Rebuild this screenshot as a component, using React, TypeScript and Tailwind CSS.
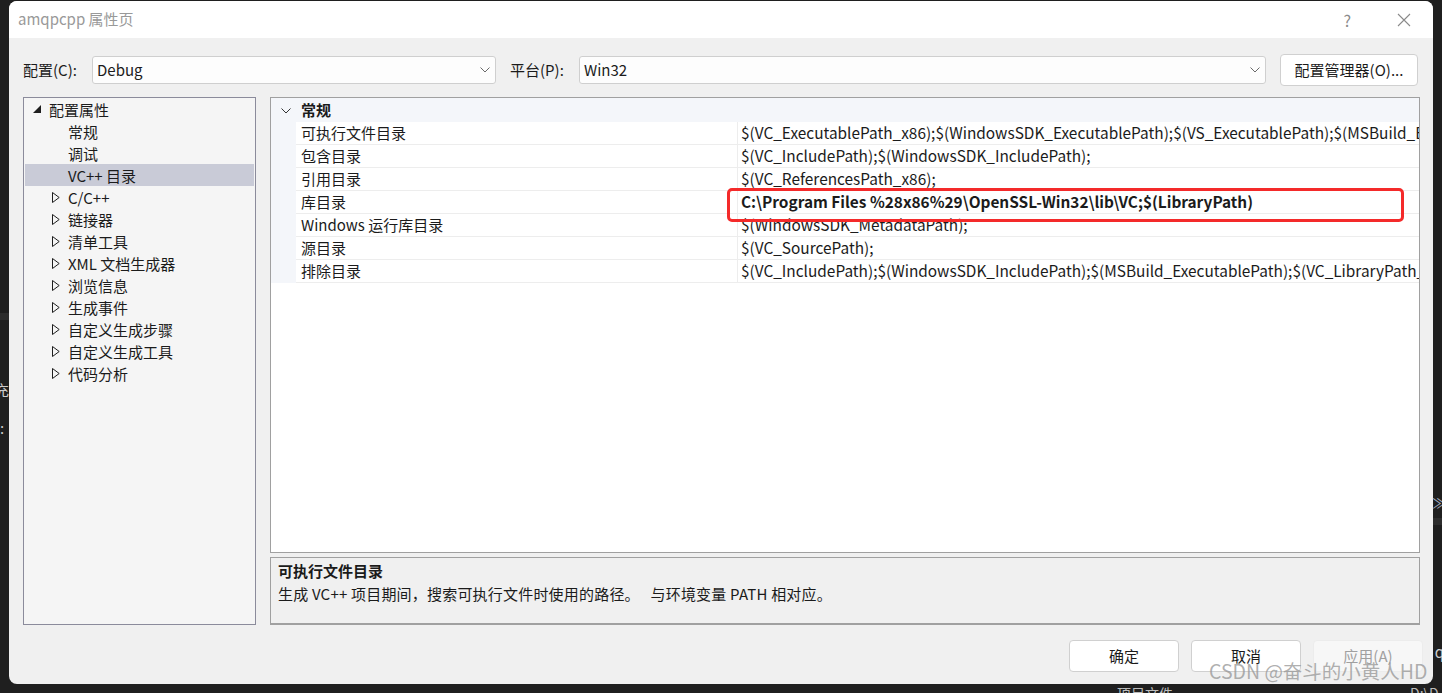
import React from 'react'

const font = { fontFamily: '"Noto Sans CJK SC", "Noto Sans", sans-serif' }

const tree = [
  { label: '配置属性', level: 0, open: true },
  { label: '常规', level: 1 },
  { label: '调试', level: 1 },
  { label: 'VC++ 目录', level: 1, selected: true },
  { label: 'C/C++', level: 1, collapsed: true },
  { label: '链接器', level: 1, collapsed: true },
  { label: '清单工具', level: 1, collapsed: true },
  { label: 'XML 文档生成器', level: 1, collapsed: true },
  { label: '浏览信息', level: 1, collapsed: true },
  { label: '生成事件', level: 1, collapsed: true },
  { label: '自定义生成步骤', level: 1, collapsed: true },
  { label: '自定义生成工具', level: 1, collapsed: true },
  { label: '代码分析', level: 1, collapsed: true },
]

const props = [
  {
    name: '可执行文件目录',
    value: '$(VC_ExecutablePath_x86);$(WindowsSDK_ExecutablePath);$(VS_ExecutablePath);$(MSBuild_ExecutablePath);$(FxCopDir);$(PATH);',
  },
  { name: '包含目录', value: '$(VC_IncludePath);$(WindowsSDK_IncludePath);' },
  { name: '引用目录', value: '$(VC_ReferencesPath_x86);' },
  {
    name: '库目录',
    value: 'C:\\Program Files %28x86%29\\OpenSSL-Win32\\lib\\VC;$(LibraryPath)',
    bold: true,
  },
  { name: 'Windows 运行库目录', value: '$(WindowsSDK_MetadataPath);' },
  { name: '源目录', value: '$(VC_SourcePath);' },
  {
    name: '排除目录',
    value: '$(VC_IncludePath);$(WindowsSDK_IncludePath);$(MSBuild_ExecutablePath);$(VC_LibraryPath_x86);',
  },
]

function Chevron({ className }: { className?: string }) {
  return (
    <svg width="10" height="6" viewBox="0 0 10 6" className={className}>
      <polyline points="0.5,0.5 5,5 9.5,0.5" fill="none" stroke="currentColor" strokeWidth="1" />
    </svg>
  )
}

function Combo({ value, width }: { value: string; width: string }) {
  return (
    <div
      className={`${width} flex h-[28px] items-center justify-between rounded-[3px] border border-[#cfcfcf] bg-[#fdfdfd] pl-[4px] pr-[5px] text-[15px] text-[#1b1b1b]`}
    >
      <span>{value}</span>
      <Chevron className="text-[#6a6a6a]" />
    </div>
  )
}

function Button({ label, disabled }: { label: string; disabled?: boolean }) {
  return (
    <div
      className={`flex h-[32px] w-[110px] items-center justify-center rounded-[4px] border text-[15px] ${
        disabled
          ? 'border-[#ececec] bg-[#f7f7f7] text-[#a0a0a0]'
          : 'border-[#d0d0d0] bg-white text-[#1b1b1b]'
      }`}
    >
      {label}
    </div>
  )
}

export default function App() {
  return (
    <div className="relative h-[693px] w-[1442px] overflow-hidden bg-[#1f1f1f] pl-[9px] pt-[1px]" style={font}>
      {/* background fragments behind the dialog */}
      <div className="absolute left-0 top-[313px] h-[7px] w-[9px] bg-[#2d2d2d]" />
      <div className="absolute left-[-6px] top-[382px] text-[15px] leading-none text-[#cccccc]">充</div>
      <div className="absolute left-0 top-[420px] text-[15px] leading-none text-[#cccccc]">:</div>
      <div className="absolute right-0 top-[518px] h-[7px] w-[9px] bg-[#2d2d2d]" />
      <div className="absolute right-[-4px] top-[495px] text-[14px] leading-none text-[#aab4c8]">≫</div>
      <div className="absolute right-[-2px] top-[644px] text-[15px] leading-none text-[#cccccc]">q</div>
      <div className="absolute left-[1117px] top-[686px] text-[14px] leading-none text-[#bbbbbb]">项目文件</div>
      <div className="absolute left-[1410px] top-[686px] text-[14px] leading-none text-[#bbbbbb]">D:\D</div>

      <div className="flex h-[683px] w-[1424px] flex-col overflow-hidden rounded-[8px] bg-[#f0f0f0]">
        {/* title bar */}
        <div className="flex h-[37px] items-center justify-between bg-white pl-[9px] pr-[22px]">
          <span className="text-[15px] text-[#999999]">amqpcpp 属性页</span>
          <div className="flex items-center gap-[46px] text-[#8a8a8a]">
            <span className="text-[16px]">?</span>
            <svg width="14" height="14" viewBox="0 0 14 14">
              <path d="M1 1 L13 13 M13 1 L1 13" stroke="currentColor" strokeWidth="1.1" />
            </svg>
          </div>
        </div>

        <div className="flex flex-1 flex-col pl-[14px] pr-[13px] pt-[16px]">
          {/* config row */}
          <div className="flex h-[32px] items-center text-[15px] text-[#1b1b1b]">
            <span className="w-[69px]">配置(C):</span>
            <Combo value="Debug" width="w-[404px]" />
            <span className="ml-[14px] w-[69px]">平台(P):</span>
            <Combo value="Win32" width="w-[687px]" />
            <div className="ml-[14px] flex h-[32px] w-[138px] items-center justify-center rounded-[4px] border border-[#d0d0d0] bg-white">
              配置管理器(O)...
            </div>
          </div>

          {/* panels */}
          <div className="mt-[11px] flex h-[528px] gap-[14px]">
            {/* tree */}
            <div className="w-[233px] border border-[#8b8b9b] bg-[#f5f5f5] px-px text-[15px] text-[#1b1b1b]">
              {tree.map((t) => (
                <div
                  key={t.label}
                  className={`flex h-[22px] items-center ${t.selected ? 'bg-[#c9cbd7]' : ''}`}
                >
                  {t.level === 0 ? (
                    <svg width="8" height="8" viewBox="0 0 8 8" className="ml-[8px] mr-[8px]">
                      <polygon points="8,0 8,8 0,8" fill="#1e1e1e" />
                    </svg>
                  ) : (
                    <span className="ml-[27px] mr-[8px] flex w-[8px] justify-center">
                      {t.collapsed && (
                        <svg width="8" height="11" viewBox="0 0 8 11">
                          <polygon points="0.5,0.5 7.2,5.5 0.5,10.5" fill="none" stroke="#1e1e1e" strokeWidth="1" />
                        </svg>
                      )}
                    </span>
                  )}
                  <span className="leading-none">{t.label}</span>
                </div>
              ))}
            </div>

            {/* right column */}
            <div className="flex w-[1150px] flex-col gap-[4px]">
              <div className="relative h-[456px] overflow-hidden border border-[#a0a0a0] bg-white text-[15px] text-[#1b1b1b]">
                <div className="flex h-[24px] items-center bg-[#f4f6fa] pt-[1px]">
                  <span className="flex w-[30px] justify-center">
                    <Chevron className="text-[#333333]" />
                  </span>
                  <span className="font-bold">常规</span>
                </div>
                {props.map((p) => (
                  <div key={p.name} className="flex h-[23px]">
                    <div className="w-[25px] shrink-0 bg-[#f4f6fa]" />
                    <div className="flex w-[441px] shrink-0 items-center border-b border-[#ededed] pl-[5px]">
                      {p.name}
                    </div>
                    <div
                      className={`flex flex-1 items-center overflow-hidden whitespace-nowrap border-b border-l border-[#ededed] pl-[3px] text-[15.4px] ${
                        p.bold ? 'font-bold' : ''
                      }`}
                    >
                      {p.value}
                    </div>
                  </div>
                ))}
                {/* highlight drawn over the library row */}
                <div className="absolute left-[456px] top-[90px] h-[34px] w-[677px] rounded-[5px] border-[3px] border-[#f42a2a]" />
              </div>

              <div className="h-[68px] border border-b-2 border-[#a0a0a0] bg-[#f0f0f0] px-[7px] pt-[2px] text-[15px] text-[#1b1b1b]">
                <div className="font-bold leading-[22px]">可执行文件目录</div>
                <div className="whitespace-pre leading-[24px] tracking-[0.2px]">
                  {'生成 VC++ 项目期间，搜索可执行文件时使用的路径。   与环境变量 PATH 相对应。'}
                </div>
              </div>
            </div>
          </div>

          {/* buttons */}
          <div className="mr-[-3px] mt-[15px] flex justify-end gap-[12px]">
            <Button label="确定" />
            <Button label="取消" />
            <Button label="应用(A)" disabled />
          </div>
        </div>
      </div>

      {/* watermark */}
      <div className="absolute left-[1209px] top-[661px] text-[19.5px] leading-none text-[#9a9a9a]/80">
        CSDN @奋斗的小黄人HD
      </div>
    </div>
  )
}
